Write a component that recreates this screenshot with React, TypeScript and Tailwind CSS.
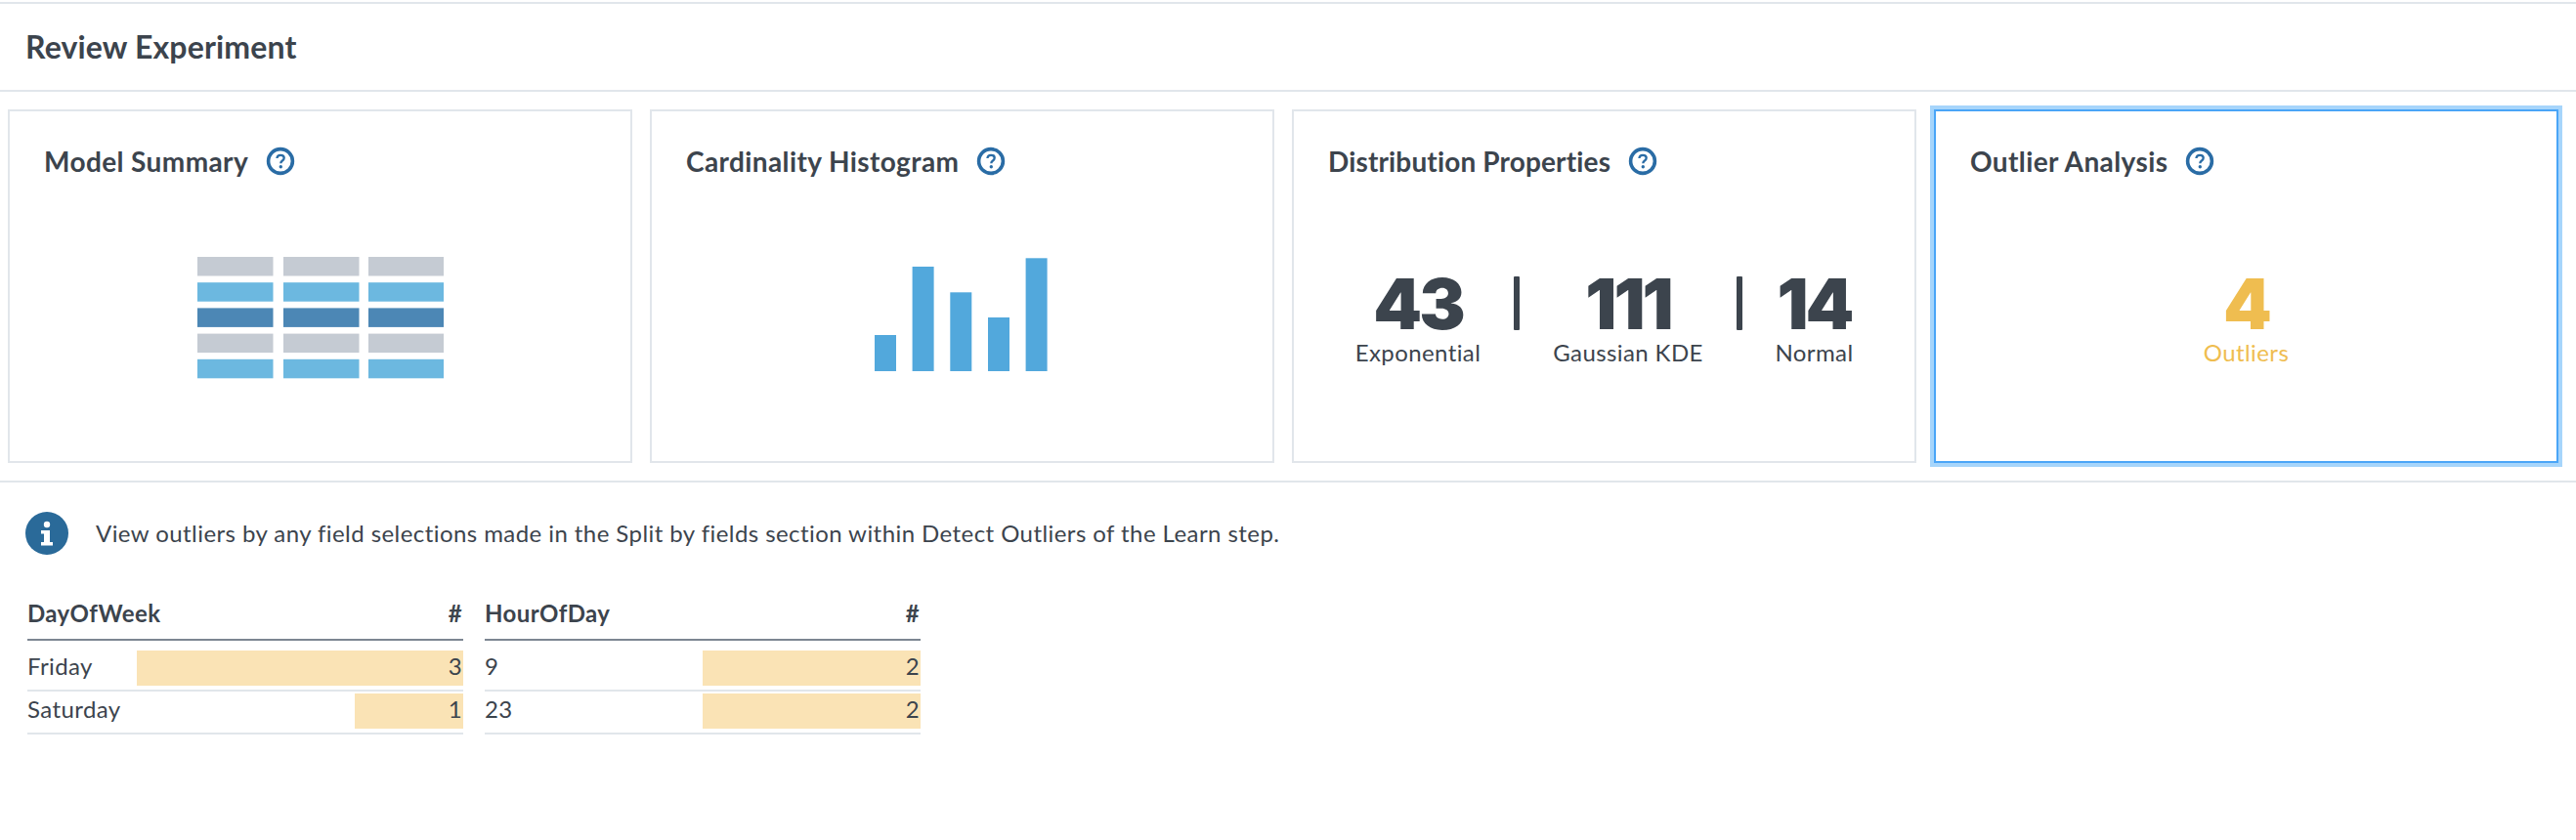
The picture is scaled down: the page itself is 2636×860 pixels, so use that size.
const HelpIcon = () => (
  <svg width="30" height="30" viewBox="0 0 30 30" className="ml-[18px] shrink-0">
    <circle cx="15" cy="15" r="12.4" fill="#fff" stroke="#2a6ca5" strokeWidth="3.6" />
    <path d="M11.4 12c.2-2 1.7-3.2 3.7-3.2 2.1 0 3.6 1.2 3.6 3 0 1.5-.9 2.3-2 3-1 .7-1.4 1.200-1.400 2.400" fill="none" stroke="#2a6ca5" strokeWidth="2.3" />
    <circle cx="15.300" cy="20.800" r="1.700" fill="#2a6ca5" />
  </svg>
);

const Heading = ({ children, tight }: { children: string; tight?: boolean }) => (
  <div className="flex items-center h-[36px] pl-[35px] mt-[33px]">
    <span
      className={
        tight
          ? "text-[28px] font-bold leading-[36px] tracking-[0.15px] text-[#3c444d] whitespace-nowrap"
          : "text-[28px] font-bold leading-[36px] tracking-[0.4px] text-[#3c444d] whitespace-nowrap"
      }
    >
      {children}
    </span>
    <HelpIcon />
  </div>
);

const Card = ({ title, active, tight, children }: { title: string; active?: boolean; tight?: boolean; children: React.ReactNode }) => (
  <div
    className={
      active
        ? "h-[362px] bg-white border-2 border-[#4aa5f7] shadow-[0_0_0_4px_#a6d5fb] flex flex-col"
        : "h-[362px] bg-white border-2 border-[#e1e6eb] flex flex-col"
    }
  >
    <Heading tight={tight}>{title}</Heading>
    {children}
  </div>
);

const tableRows = ["#c5cbd3", "#6cb8e0", "#4c87b5", "#c5cbd3", "#6cb8e0"];
const tableCols = [0, 88, 175];

const TableGraphic = () => (
  <svg width="252" height="125" viewBox="0 0 252 125" className="block">
    {tableRows.map((color, r) =>
      tableCols.map((x) => <rect key={`${r}-${x}`} x={x} y={r * 26.2} width="77.5" height="19.5" fill={color} />)
    )}
  </svg>
);

const histBars = [
  { x: 0, top: 79 },
  { x: 38.6, top: 9 },
  { x: 77.3, top: 35.3 },
  { x: 116, top: 61 },
  { x: 154.6, top: 0.3 },
];

const HistGraphic = () => (
  <svg width="177" height="116" viewBox="0 0 177 116" className="block mr-[3px]">
    {histBars.map((b) => (
      <rect key={b.x} x={b.x} y={b.top} width="22" height={116 - b.top} fill="#52a8dc" />
    ))}
  </svg>
);

const stats = [
  { n: "43", label: "Exponential", w: "w-[128px]" },
  { n: "111", label: "Gaussian KDE", w: "w-[154px]" },
  { n: "14", label: "Normal", w: "w-[79px]" },
];

const Stat = ({ n, label, w, color }: { n: string; label: string; w: string; color: string }) => (
  <div className={`${w} flex flex-col items-center`} style={{ color }}>
    <div
      className="text-[71px] font-black tracking-[-3px] leading-[60px] h-[60px] whitespace-nowrap"
      style={{ fontFamily: "Inter, Lato, sans-serif" }}
    >
      {n}
    </div>
    <div className="text-[24px] tracking-[0.4px] leading-[30px] mt-[5px] whitespace-nowrap">{label}</div>
  </div>
);

const Sep = () => <div className="w-[6px] h-[55px] mx-[34px] mt-[2px] bg-[#3c444d] rounded-[1px]" />;

const InfoIcon = () => (
  <svg width="44" height="44" viewBox="0 0 44 44" className="shrink-0">
    <circle cx="22" cy="22" r="22" fill="#2a6a99" />
    <circle cx="22" cy="13" r="3.2" fill="#fff" />
    <path d="M16 19h9v12h3v3.5H16V31h3v-8.500h-3z" fill="#fff" />
  </svg>
);

type Row = { label: string; value: number; width: string };

const Breakdown = ({ field, rows }: { field: string; rows: Row[] }) => (
  <div className="w-[446px] text-[24px] tracking-[0.4px] text-[#3c444d]">
    <div className="flex justify-between items-center h-[50px] pb-[4px] border-b-2 border-[#7c8692] font-bold">
      <span>{field}</span>
      <span className="pr-[1px]">#</span>
    </div>
    <div className="pt-[10px] flex flex-col gap-[2px]">
      {rows.map((r) => (
        <div key={r.label} className="relative flex items-center justify-between h-[42px] pb-[8px] border-b-2 border-[#e1e6eb]">
          <div className={`absolute right-0 top-0 h-[36px] bg-[#fae3b5] ${r.width}`} />
          <span className="relative">{r.label}</span>
          <span className="relative pr-[1px]">{r.value}</span>
        </div>
      ))}
    </div>
  </div>
);

export default function App() {
  return (
    <div
      className="w-[2636px] h-[860px] bg-white overflow-hidden"
      style={{ fontFamily: "Lato, 'Open Sans', sans-serif" }}
    >
      <header className="mt-[2px] h-[92px] border-y-2 border-[#e1e6eb] flex items-center pl-[26px]">
        <h1 className="text-[32px] font-bold tracking-[0.15px] text-[#3c444d]">Review Experiment</h1>
      </header>

      <section className="grid grid-cols-4 gap-[18px] pl-[8px] pr-[18px] py-[18px] border-b-2 border-[#e1e6eb]">
        <Card title="Model Summary">
          <div className="flex justify-center mt-[80px]">
            <TableGraphic />
          </div>
        </Card>
        <Card title="Cardinality Histogram">
          <div className="flex justify-center mt-[81px]">
            <HistGraphic />
          </div>
        </Card>
        <Card title="Distribution Properties" tight>
          <div className="flex justify-center mt-[98px]">
            <Stat {...stats[0]} color="#3c444d" />
            <Sep />
            <Stat {...stats[1]} color="#3c444d" />
            <Sep />
            <Stat {...stats[2]} color="#3c444d" />
          </div>
        </Card>
        <Card title="Outlier Analysis" active>
          <div className="flex justify-center mt-[98px]">
            <Stat n="4" label="Outliers" w="w-[128px]" color="#efbd50" />
          </div>
        </Card>
      </section>

      <div className="flex items-center mt-[30px] pl-[26px] h-[44px]">
        <InfoIcon />
        <p className="ml-[28px] text-[24px] tracking-[0.43px] text-[#3c444d] whitespace-nowrap">
          View outliers by any field selections made in the Split by fields section within Detect Outliers of the Learn step.
        </p>
      </div>

      <div className="flex gap-[22px] pl-[28px] mt-[38px]">
        <Breakdown
          field="DayOfWeek"
          rows={[
            { label: "Friday", value: 3, width: "w-3/4" },
            { label: "Saturday", value: 1, width: "w-1/4" },
          ]}
        />
        <Breakdown
          field="HourOfDay"
          rows={[
            { label: "9", value: 2, width: "w-1/2" },
            { label: "23", value: 2, width: "w-1/2" },
          ]}
        />
      </div>
    </div>
  );
}
